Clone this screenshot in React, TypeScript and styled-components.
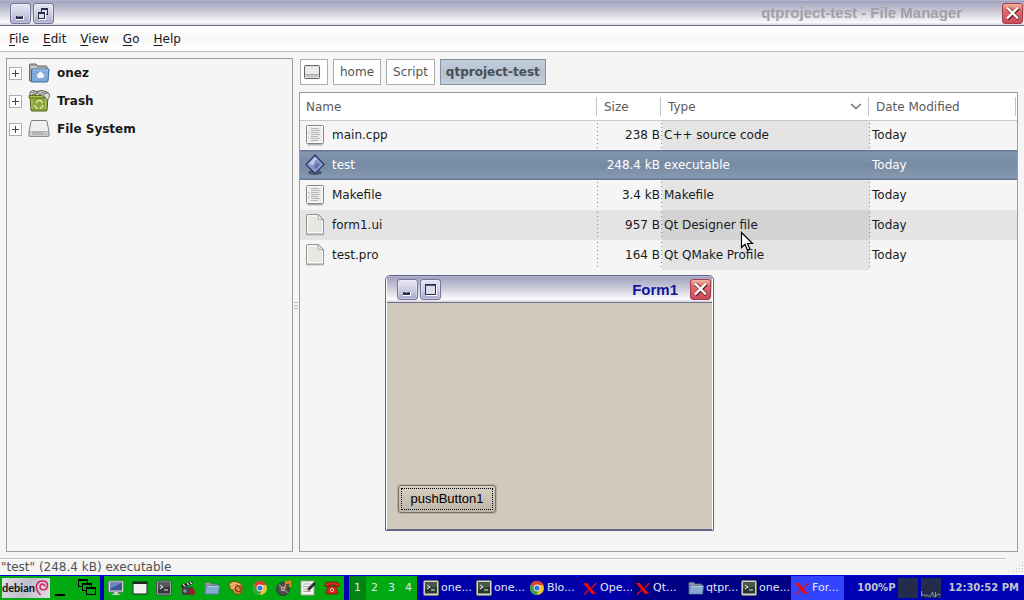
import React from "react";
import styled, { createGlobalStyle, css } from "styled-components";

const GlobalStyle = createGlobalStyle`
  * { box-sizing: border-box; }
  html, body { margin: 0; height: 100%; }
  #root { height: 100%; }
  body { font: 12px/16px "DejaVu Sans", sans-serif; color: #1a1a1a; background: #f5f5f5; overflow: hidden; }
  button { font: inherit; color: inherit; border: 0; padding: 0; margin: 0; background: none; }
  svg { display: block; flex: none; }
`;

const Desktop = styled.div`
  position: relative;
  min-height: 100vh;
  display: flex;
  flex-direction: column;
`;

/* ---------- window chrome ---------- */

const TitleBar = styled.header<{ $floating?: boolean }>`
  height: ${(p) => (p.$floating ? 27 : 26)}px;
  display: flex;
  align-items: center;
  gap: 2px;
  padding: 0 1px 0 10px;
  border-top: 1px solid #b4b4cc;
  border-bottom: 1px solid #70708c;
  background: linear-gradient(#a2a2c0, #c6c6d4 40%, #f6f6f8 85%, #ffffff 88%, #d0d0dc);
  flex: none;
`;

const Title = styled.h1<{ $active?: boolean; $gap: number }>`
  flex: 1;
  margin: 0;
  padding-right: ${(p) => p.$gap}px;
  text-align: right;
  font: bold 15px/20px "Liberation Sans", sans-serif;
  color: ${(p) => (p.$active ? "#1414a0" : "#a0a0a4")};
`;

const ChromeButton = styled.button<{ $close?: boolean }>`
  width: 21px;
  height: 21px;
  border: 1px solid #74749c;
  border-radius: 3px;
  display: flex;
  align-items: center;
  justify-content: center;
  background: linear-gradient(#e6e6f2, #c8c8de 60%, #a6a6c8);
  box-shadow: inset 0 0 0 1px #ffffff55;
  ${(p) =>
    p.$close &&
    css`
      border-color: #a83c4c;
      background: linear-gradient(#f0b8a0, #e06c6c 30%, #c84c58);
      box-shadow: none;
    `}
`;

const MinimizeIcon = () => (
  <svg width="19" height="19" viewBox="0 0 19 19" shapeRendering="crispEdges">
    <path d="M5 12h8v4H5z" fill="#fff" />
    <path d="M5 12h7v3H5z" fill="#2c2c48" />
    <path d="M6 12h5v1H6z" fill="#77779a" />
  </svg>
);
const RestoreIcon = () => (
  <svg width="19" height="19" viewBox="0 0 19 19" shapeRendering="crispEdges">
    <path d="M7.5 4.500h6v6h-6z" fill="#dcdcea" stroke="#2c2c48" />
    <path d="M7 5.500h7" stroke="#2c2c48" />
    <path d="M4.500 8.500h6v6h-6z" fill="#dcdcea" stroke="#2c2c48" />
    <path d="M4 9.500h7" stroke="#2c2c48" />
    <path d="M5 15.500h7M11.500 9v6" stroke="#fff" />
  </svg>
);
const MaximizeIcon = () => (
  <svg width="19" height="19" viewBox="0 0 19 19" shapeRendering="crispEdges">
    <path d="M5 15.500h11M15.500 5v10" stroke="#fff" />
    <path d="M4.500 4.500h10v10h-10z" fill="#dcdcea" stroke="#2c2c48" />
    <path d="M5 5.500h9" stroke="#505078" />
  </svg>
);
const CloseIcon = () => (
  <svg width="19" height="19" viewBox="0 0 19 19">
    <path d="M4.500 4l11 11M15.500 4l-11 11" stroke="#5a1820" strokeWidth="3.600" />
    <path d="M4 3.500l11 11M15 3.500l-11 11" stroke="#fff" strokeWidth="2.400" />
  </svg>
);

const MenuBar = styled.nav`
  height: 26px;
  display: flex;
  align-items: center;
  padding-left: 2px;
  border-bottom: 1px solid #c2c2c2;
  background: linear-gradient(#ffffff, #f6f6f6 55%, #fbfbfb 60%, #ffffff);
  flex: none;
`;
const MenuButton = styled.button`
  padding: 0 7px;
  u { text-underline-offset: 2px; }
`;

/* ---------- body ---------- */

const Body = styled.main`
  flex: 1;
  display: flex;
  padding: 6px;
`;

const SidePane = styled.aside`
  width: 287px;
  flex: none;
  border: 1px solid #9c9c9c;
`;
const Tree = styled.ul`
  list-style: none;
  margin: 0;
  padding: 0 0 0 2px;
`;
const TreeItem = styled.li`
  height: 28px;
  display: flex;
  align-items: center;
  font-weight: bold;
`;
const Expander = styled.button`
  width: 13px;
  height: 13px;
  margin-right: 6px;
  border: 1px solid #b0b0b0;
  background: #fff;
`;
const TreeLabel = styled.span`
  padding-left: 7px;
`;

const Splitter = styled.div`
  width: 6px;
  flex: none;
  display: flex;
  align-items: center;
  justify-content: center;
`;

const MainPane = styled.section`
  flex: 1;
  min-width: 0;
  display: flex;
  flex-direction: column;
`;
const PathBar = styled.nav`
  display: flex;
  gap: 5px;
  padding: 1px 0 7px 1px;
`;
const PathButton = styled.button<{ $current?: boolean; $icon?: boolean }>`
  height: 26px;
  padding: 0 ${(p) => (p.$icon ? 3 : p.$current ? 5 : 6)}px;
  border: 1px solid #adadad;
  background: #fff;
  color: #555;
  ${(p) =>
    p.$current &&
    css`
      font-weight: bold;
      color: #4a4f54;
      border-color: #8393a5;
      background: linear-gradient(#c3ceda, #b4c2d2 55%, #c4cfdb);
    `}
`;

const ListBox = styled.div`
  flex: 1;
  border: 1px solid #9c9c9c;
  background: #f5f5f5;
`;
const FileTable = styled.table`
  width: 100%;
  table-layout: fixed;
  border-collapse: collapse;
`;
const HeadCell = styled.th<{ $width?: number }>`
  width: ${(p) => (p.$width ? `${p.$width}px` : "auto")};
  height: 27px;
  padding: 1px 8px 0 6px;
  text-align: left;
  font-weight: normal;
  color: #5a5a5a;
  border-bottom: 1px solid #c8c8c8;
  background: linear-gradient(#c4c4c4, #c4c4c4) right 1px center / 1px 19px no-repeat, #fff;
`;
const HeadInner = styled.div`
  display: flex;
  align-items: center;
  justify-content: space-between;
`;
const Row = styled.tr<{ $selected?: boolean; $alt?: boolean }>`
  height: 30px;
  background: ${(p) => (p.$alt ? "#e4e4e4" : "#f5f5f5")};
  ${(p) =>
    p.$selected &&
    css`
      color: #fff;
      background: linear-gradient(#63779a 1px, #8396b0 2px, #768aa3 50%, #8599b1 28px, #63779a 29px);
    `}
`;
const Cell = styled.td<{ $shade?: string; $right?: boolean; $last?: boolean }>`
  padding: 0 2px;
  text-align: ${(p) => (p.$right ? "right" : "left")};
  white-space: nowrap;
  background-color: ${(p) => p.$shade ?? "transparent"};
  background-image: ${(p) =>
    p.$last ? "none" : "repeating-linear-gradient(transparent 0 2px, #888 2px 3px, transparent 3px 4px)"};
  background-size: 1px 100%;
  background-position: right top;
  background-repeat: no-repeat;
`;
const NameInner = styled.div`
  display: flex;
  align-items: center;
  gap: 7px;
  padding-left: 3px;
`;

/* ---------- status ---------- */

const StatusBar = styled.footer`
  height: 17px;
  flex: none;
  display: flex;
  justify-content: space-between;
  align-items: flex-end;
  color: #505050;
`;
const StatusText = styled.span`
  flex: 1;
  height: 17px;
  margin-right: 6px;
  padding-left: 1px;
  border-top: 1px solid #c4c4c4;
  box-shadow: inset 0 1px 0 #fff;
`;

/* ---------- floating window ---------- */

const FormWindow = styled.section`
  position: absolute;
  left: 385px;
  top: 275px;
  width: 329px;
  height: 256px;
  display: flex;
  flex-direction: column;
  border: 1px solid #64648a;
  border-radius: 5px 5px 0 0;
  padding: 0 1px;
  background: #fff;
  overflow: hidden;
`;
const FormBody = styled.div`
  flex: 1;
  display: flex;
  align-items: flex-end;
  padding: 0 10px 16px;
  background: #d1c9bc;
  border-bottom: 1px solid #64648a;
`;
const PushButton = styled.button`
  width: 98px;
  height: 28px;
  padding: 2px;
  border: 1px solid #77735f;
  border-radius: 3px;
  background: linear-gradient(#d6cfc2, #bdb6a8);
  box-shadow: 0 0 0 1px #b6afa1;
  font: 13px/20px "Liberation Sans", sans-serif;
  color: #000;
  margin-left: 1px;
`;
const FocusRing = styled.span`
  display: block;
  border: 1px dotted #000;
`;

/* ---------- taskbar ---------- */

const Taskbar = styled.footer`
  height: 25px;
  flex: none;
  display: flex;
  border-top: 1px solid #0000d8;
  background: #0000b4;
  color: #e4e4f4;
  font-size: 11px;
  line-height: 24px;
`;
const GreenGroup = styled.div<{ $gap?: number }>`
  display: flex;
  align-items: center;
  background: #00aa10;
  margin-right: ${(p) => p.$gap ?? 0}px;
`;
const Debian = styled.button`
  display: flex;
  align-items: center;
  height: 20px;
  width: 48px;
  margin-left: 2px;
  background: linear-gradient(120deg, #e4e0e6, #bcbccc 50%, #e4e0e6);
  color: #111;
  font: bold 11px/20px "Lato", sans-serif;
`;
const Launcher = styled.button<{ $w?: number }>`
  width: ${(p) => p.$w ?? 24}px;
  height: 24px;
  display: flex;
  align-items: center;
  justify-content: center;
`;
const Desk = styled.button<{ $on?: boolean }>`
  width: 17px;
  height: 24px;
  background: ${(p) => (p.$on ? "#008414" : "transparent")};
`;
const Tasks = styled.div`
  flex: 1;
  min-width: 0;
  display: flex;
  padding-left: 3px;
`;
const Task = styled.button<{ $tone?: "dark" | "active" }>`
  flex: 0 1 53px;
  height: 24px;
  padding-left: 3px;
  display: flex;
  align-items: center;
  gap: 2px;
  overflow: hidden;
  white-space: nowrap;
  background: ${(p) => (p.$tone === "active" ? "#3344ff" : p.$tone === "dark" ? "#000086" : "#0000a8")};
`;
const Tray = styled.div`
  display: flex;
  align-items: center;
  gap: 3px;
  padding-right: 5px;
  font-size: 10px;
  font-weight: bold;
  color: #c4c4d0;
`;
const Clock = styled.time`
  padding-left: 4px;
`;

/* ---------- icons ---------- */

const FolderHome = () => (
  <svg width="22" height="22" viewBox="0 0 22 22">
    <path d="M1.500 19V3q0-1 1-1H8l1.500 2H18q1 0 1 1v14z" fill="#a8a8a4" stroke="#6c6c6c" />
    <path d="M3 4h5l1 2h9v4H3z" fill="#c8c8c4" />
    <path d="M3.500 8q0-1 1-1h16.500L20 19q-.2 1-1 1H3.500z" fill="#7fa9d8" stroke="#3c6aa4" />
    <path d="M5 8h15" stroke="#b4d0ec" />
    <path d="M12.500 9.500l4.500 4h-1.500v2.500h-6v-2.500H8z" fill="#f2f7fc" />
  </svg>
);
const TrashIcon = () => (
  <svg width="22" height="22" viewBox="0 0 22 22">
    <path d="M2 5V2l3-1.500 4 1 4-1 5 1 3 2-1 4H2z" fill="#c4c6c2" stroke="#62645f" />
    <path d="M5 2l2 3 2-3 3 3 3-3M17 2l1 3M4 4l1 1" fill="none" stroke="#6a6c68" />
    <path d="M2 7.500h18l-1 12.500q0 1-1 1H4q-1 0-1-1z" fill="#8ca43c" stroke="#4c6414" />
    <path d="M4 9v10M18 9l-.5 10" stroke="#b4c870" />
    <path d="M1 5.500h13l2 2.500H1z" fill="#a8c050" stroke="#5a7818" />
    <path d="M15 4.500q6-3 6.500.5t-3 5l-1.500-3z" fill="#dcdedc" stroke="#70726e" />
    <path d="M8 13l2-2.500h3l1.500 2.500M15 15l-1.500 3h-2M10 18H8l-1.500-3" fill="none" stroke="#d8e4a8" strokeWidth="1.500" />
  </svg>
);
const DriveIcon = () => (
  <svg width="22" height="22" viewBox="0 0 22 22">
    <path d="M4 2.500h14q.8 0 1 1l2 10v4q0 1-1 1H2q-1 0-1-1v-4l2-10q.2-1 1-1z" fill="#f0f0ee" stroke="#808080" />
    <path d="M1.500 13.500h19v4q0 .8-.8.8H2.300q-.8 0-.8-.8z" fill="#d4d4d4" stroke="#909090" strokeWidth=".6" />
    <path d="M5 14v3M7 14v3M9 14v3M11 14v3M13 14v3M15 14v3M18 15v2" stroke="#989898" />
  </svg>
);
const SmallDrive = () => (
  <svg width="20" height="16" viewBox="0 0 20 16">
    <rect x=".5" y="1.500" width="15" height="13" rx="1" fill="#e0e0e0" stroke="#666" />
    <path d="M2 3h12l.5 7h-13z" fill="#ececec" />
    <path d="M1 10.500h14" stroke="#aaa" />
    <path d="M3 11v2M5 11v2M7 11v2M9 11v2M11 11v2M13 11v2" stroke="#aaa" />
  </svg>
);
const TextFile = () => (
  <svg width="20" height="22" viewBox="0 0 20 22">
    <path d="M2.500 20.500h15" stroke="#b4b4b0" strokeWidth="2" />
    <rect x="1.500" y="1.500" width="17" height="18" rx="1" fill="#ebebea" stroke="#84847f" />
    <rect x="2.500" y="2.500" width="15" height="16" fill="none" stroke="#fcfcfc" />
    <path d="M6 4.500h8M6 6.500h9M6 8.500h8M6 10.500h9M6 12.500h7M6 14.500h9M6 16.500h7" stroke="#b8b8b6" />
    <path d="M3 8.500h1M3 13.500h1" stroke="#999" />
  </svg>
);
const BlankFile = () => (
  <svg width="20" height="22" viewBox="0 0 20 22">
    <path d="M1 20.500h18" stroke="#c0c0bc" strokeWidth="2" />
    <path d="M2.500 .5h11l5 5v13.500q0 1-1 1h-15q-1 0-1-1V1.500q0-1 1-1z" fill="#e6e8e4" stroke="#92948f" />
    <path d="M12 2H2.700v16.700h14.800V8" fill="none" stroke="#fcfcfc" />
    <path d="M13 .5q.5 2 .3 4.700 3-.2 5.200.8z" fill="#fff" stroke="#92948f" strokeWidth=".8" />
  </svg>
);
const ExecIcon = () => (
  <svg width="20" height="22" viewBox="0 0 20 22">
    <ellipse cx="10" cy="18.500" rx="7" ry="2.500" fill="#384862" opacity=".8" />
    <path d="M10 1l9 9.500-9 9L1 10.500z" fill="#8594c0" stroke="#26346a" strokeWidth="1.200" />
    <path d="M10 3l7 7.500-7 7-7-7z" fill="none" stroke="#a8b6dc" strokeWidth=".8" />
    <path d="M10 3l-6 7 4 1 2-4 2-2z" fill="#c0cae6" />
    <path d="M12 9l3 1-4 5-2-2z" fill="#5c6ea4" />
  </svg>
);
const Plus = () => (
  <svg width="11" height="11" viewBox="0 0 11 11">
    <path d="M2 5.500h7M5.500 2v7" stroke="#444" />
  </svg>
);
const Chevron = () => (
  <svg width="12" height="8" viewBox="0 0 12 8">
    <path d="M1 1l5 4.500L11 1" fill="none" stroke="#707070" strokeWidth="1.600" />
  </svg>
);
const SplitGrip = () => (
  <svg width="4" height="9" viewBox="0 0 4 9">
    <path d="M0 1.500h4M0 4.500h4M0 7.500h4" stroke="#b8b8b8" />
  </svg>
);
const Grip = () => (
  <svg width="12" height="14" viewBox="0 0 12 14" fill="#bcbcbc">
    {[0, 1, 2, 3].flatMap((r) =>
      Array.from({ length: r + 1 }, (_, i) => <rect key={`${r}-${i}`} x={10 - i * 3} y={r * 3 + 1} width="1" height="1" />)
    )}
  </svg>
);
const Swirl = () => (
  <svg width="14" height="18" viewBox="0 0 15 18">
    <path
      d="M6 16.500Q1 12 1.500 7 2.500 1.500 8 1.500t5.500 5Q13 11 9 11T5.500 7.500 8.500 5t2.500 2.500"
      fill="none"
      stroke="#d8205c"
      strokeWidth="1.600"
    />
  </svg>
);
const ShowDesktop = () => (
  <svg width="12" height="20" viewBox="0 0 12 20">
    <path d="M0 16h10v2H0z" fill="#000" />
  </svg>
);
const Cascade = () => (
  <svg width="20" height="20" viewBox="0 0 20 20" shapeRendering="crispEdges">
    {[0, 4, 8].map((o) => (
      <g key={o}>
        <rect x={o + 2.5} y={o + 1.5} width="9" height="7" fill="#00aa10" stroke="#000" />
        <path d={`M${o + 2} ${o + 2.5}h10`} stroke="#000" />
      </g>
    ))}
  </svg>
);
const Monitor = () => (
  <svg width="16" height="16" viewBox="0 0 16 16">
    <rect x=".5" y="1" width="15" height="11" rx="1" fill="#d8d8d4" stroke="#808088" />
    <rect x="2" y="2.500" width="12" height="8" fill="#3c5894" />
    <path d="M2 2.500h12L2 9z" fill="#6c88bc" />
    <path d="M6 12h4v1.500l3 1.500H3l3-1.500z" fill="#ccc" />
  </svg>
);
const WindowIcon = () => (
  <svg width="16" height="16" viewBox="0 0 16 16">
    <rect x="1" y="2" width="14" height="12" fill="#f0f0ec" stroke="#222" />
    <path d="M1 3h14" stroke="#222" strokeWidth="2" />
  </svg>
);
const TerminalIcon = () => (
  <svg width="16" height="16" viewBox="0 0 16 16">
    <rect x=".5" y=".5" width="15" height="15" rx="1.500" fill="#d4d4ca" stroke="#77776e" />
    <rect x="2" y="2" width="12" height="11.500" fill="#263a2c" />
    <path d="M2 2h12v5L2 9z" fill="#47584a" />
    <path d="M4 5l3 2-3 2M8 10h4" fill="none" stroke="#f0f0f0" />
  </svg>
);
const DarkTerminal = () => (
  <svg width="16" height="16" viewBox="0 0 16 16">
    <rect x=".5" y="1" width="15" height="14" rx="1" fill="#a0a0a0" stroke="#505050" />
    <rect x="2" y="2.500" width="12" height="11" fill="#343638" />
    <path d="M2 2.500h12v4L2 9z" fill="#54565a" />
    <path d="M4 5l3 2-3 2M8 10h4" fill="none" stroke="#f0f0f0" />
  </svg>
);
const Clapper = () => (
  <svg width="16" height="16" viewBox="0 0 16 16">
    <path d="M2 7h11v8H2z" fill="#404040" />
    <path d="M1 5l11-4 1 3L2 8z" fill="#222" />
    <path d="M3 4.300l2 2M7 3l2 2M10 2l2 2" stroke="#ddd" strokeWidth="1.300" />
    <circle cx="5" cy="11" r="1.700" fill="#909090" />
    <ellipse cx="12" cy="12" rx="3" ry="3.500" fill="#8e2420" />
    <path d="M11 8l1 3" stroke="#444" />
  </svg>
);
const FolderIcon = () => (
  <svg width="16" height="16" viewBox="0 0 16 16">
    <path d="M1 13.500V2.500h5l1 1.500h6.500v9.500z" fill="#9a9c98" stroke="#6a7078" strokeWidth=".8" />
    <path d="M2.500 5.500H15.500L14.500 14H1z" fill="#87aad0" stroke="#527ba8" strokeWidth=".8" />
    <path d="M3.500 6.500h11" stroke="#bcd4ea" strokeWidth=".8" />
  </svg>
);
const Shell = () => (
  <svg width="16" height="16" viewBox="0 0 16 16">
    <path d="M1 5Q1 1.500 6 1.500q6 0 8 4 1.500 4-.5 7T8 14q-3-1-3.500-4Q1 9 1 5z" fill="#d88c40" stroke="#7c3c10" strokeWidth=".8" />
    <path d="M2 5q4-1 6 2M3 8q2-1 4 0" fill="none" stroke="#f8d8a0" strokeWidth="1.200" />
    <path d="M12.500 6.500q-4-2-5 1t2 4 3.500-2-2-1.500" fill="none" stroke="#703408" strokeWidth="1.200" />
    <path d="M4 3q5-.5 8 2" fill="none" stroke="#f8d898" />
  </svg>
);
const ChromeLogo = () => (
  <svg width="16" height="16" viewBox="0 0 16 16">
    <circle cx="8" cy="8" r="7" fill="#f0c428" />
    <path d="M1.900 4.500A7 7 0 0 1 14.500 5H8a3 3 0 0 0-2.600 4.500z" fill="#dc4030" />
    <path d="M1.900 4.500A7 7 0 0 0 7.500 15l3-5.500a3 3 0 0 1-5.100 0z" fill="#38a048" />
    <circle cx="8" cy="8" r="3.400" fill="#f4f4f4" />
    <circle cx="8" cy="8" r="2.600" fill="#3c78d0" />
  </svg>
);
const Music = () => (
  <svg width="16" height="16" viewBox="0 0 16 16">
    <circle cx="7" cy="9" r="6.500" fill="#4c4c4c" stroke="#303030" />
    <path d="M7 9L3 4.500M7 9l5 4" stroke="#888" strokeWidth="1.500" />
    <circle cx="7" cy="9" r="2.200" fill="#b8b8b8" />
    <circle cx="7" cy="9" r=".8" fill="#222" />
    <path d="M9.500 7V2l5-1v5M9.500 3.500l5-1" fill="none" stroke="#f08020" strokeWidth="1.300" />
    <path d="M8 7h2M13 6h2" stroke="#f08020" strokeWidth="2" />
  </svg>
);
const Editor = () => (
  <svg width="16" height="16" viewBox="0 0 16 16">
    <path d="M1 1h13v14H1z" fill="#f6f6f4" stroke="#a0a09c" />
    <path d="M3 4h8M3 6.500h7M3 9h4M3 11.500h8" stroke="#a8a8a8" />
    <path d="M15 3l-7 7" stroke="#303030" strokeWidth="3" />
    <path d="M6 11.500l1-3 2 2z" fill="#d8b070" />
  </svg>
);
const Phone = () => (
  <svg width="16" height="16" viewBox="0 0 16 16">
    <path d="M1 6.500V4q0-2 7-2t7 2v2.500h-4V5H5v1.500z" fill="#d8241c" stroke="#781008" strokeWidth=".7" />
    <path d="M4.500 6.500h7l2 4v3.500h-11v-3.500z" fill="#d8241c" stroke="#781008" strokeWidth=".7" />
    <circle cx="8" cy="10" r="2" fill="#f0d0c4" />
    <circle cx="8" cy="10" r=".9" fill="#a01010" />
  </svg>
);
const XLogo = () => (
  <svg width="16" height="16" viewBox="0 0 16 16">
    <path d="M1 3h4l9 11h-4z" fill="#f00808" />
    <path d="M14.500 3L9.500 8M6.500 10L2 14.500" stroke="#f00808" strokeWidth="1.200" />
  </svg>
);
const MemGraph = () => (
  <svg width="20" height="20" viewBox="0 0 20 20">
    <path d="M0 0h20v20H0z" fill="#242c4c" />
  </svg>
);
const CpuGraph = () => (
  <svg width="20" height="20" viewBox="0 0 20 20">
    <path d="M0 0h20v20H0z" fill="#242c4c" />
    <path d="M.5 13v5l2-2 2 2 2-1 2 2 2-2 1-3 1 4 2 1V14M14.500 18l3-2 2 1" fill="none" stroke="#8c94a8" />
  </svg>
);

const Cursor = styled.svg`
  position: absolute;
  left: 740px;
  top: 231px;
`;

/* ---------- data ---------- */

const menus = ["File", "Edit", "View", "Go", "Help"];
const places = [
  { name: "onez", Icon: FolderHome },
  { name: "Trash", Icon: TrashIcon },
  { name: "File System", Icon: DriveIcon },
];
const files = [
  { name: "main.cpp", size: "238 B", type: "C++ source code", Icon: TextFile },
  { name: "test", size: "248.4 kB", type: "executable", Icon: ExecIcon, selected: true },
  { name: "Makefile", size: "3.4 kB", type: "Makefile", Icon: TextFile },
  { name: "form1.ui", size: "957 B", type: "Qt Designer file", Icon: BlankFile, alt: true },
  { name: "test.pro", size: "164 B", type: "Qt QMake Profile", Icon: BlankFile },
];
const launchers = [
  { name: "Desktop", Icon: Monitor },
  { name: "Window", Icon: WindowIcon },
  { name: "Terminal", Icon: DarkTerminal },
  { name: "Video", Icon: Clapper },
  { name: "Files", Icon: FolderIcon },
  { name: "Shell", Icon: Shell },
  { name: "Browser", Icon: ChromeLogo },
  { name: "Music", Icon: Music },
  { name: "Editor", Icon: Editor },
  { name: "Phone", Icon: Phone },
];
const tasks: { label: string; Icon: () => React.ReactElement; tone?: "dark" | "active" }[] = [
  { label: "one...", Icon: TerminalIcon },
  { label: "one...", Icon: TerminalIcon },
  { label: "Blo...", Icon: ChromeLogo },
  { label: "Ope...", Icon: XLogo },
  { label: "Qt...", Icon: XLogo, tone: "dark" },
  { label: "qtpr...", Icon: FolderIcon, tone: "dark" },
  { label: "one...", Icon: TerminalIcon, tone: "dark" },
  { label: "For...", Icon: XLogo, tone: "active" },
];

export default function App() {
  return (
    <>
      <GlobalStyle />
      <Desktop>
        <TitleBar>
          <ChromeButton aria-label="Minimize"><MinimizeIcon /></ChromeButton>
          <ChromeButton aria-label="Restore"><RestoreIcon /></ChromeButton>
          <Title $gap={38}>qtproject-test - File Manager</Title>
          <ChromeButton $close aria-label="Close"><CloseIcon /></ChromeButton>
        </TitleBar>
        <MenuBar>
          {menus.map((m) => (
            <MenuButton key={m}><u>{m[0]}</u>{m.slice(1)}</MenuButton>
          ))}
        </MenuBar>
        <Body>
          <SidePane>
            <Tree>
              {places.map(({ name, Icon }) => (
                <TreeItem key={name}>
                  <Expander aria-label={`Expand ${name}`}><Plus /></Expander>
                  <Icon />
                  <TreeLabel>{name}</TreeLabel>
                </TreeItem>
              ))}
            </Tree>
          </SidePane>
          <Splitter><SplitGrip /></Splitter>
          <MainPane>
            <PathBar>
              <PathButton $icon aria-label="File System"><SmallDrive /></PathButton>
              <PathButton>home</PathButton>
              <PathButton>Script</PathButton>
              <PathButton $current>qtproject-test</PathButton>
            </PathBar>
            <ListBox>
              <FileTable>
                <thead>
                  <tr>
                    <HeadCell>Name</HeadCell>
                    <HeadCell $width={64}>Size</HeadCell>
                    <HeadCell $width={208}><HeadInner>Type<Chevron /></HeadInner></HeadCell>
                    <HeadCell $width={147}>Date Modified</HeadCell>
                  </tr>
                </thead>
                <tbody>
                  {files.map(({ name, size, type, Icon, selected, alt }) => (
                    <Row key={name} $selected={selected} $alt={alt}>
                      <Cell><NameInner><Icon />{name}</NameInner></Cell>
                      <Cell $right>{size}</Cell>
                      <Cell $shade={selected ? undefined : alt ? "#d3d3d3" : "#e4e4e4"}>{type}</Cell>
                      <Cell $last>Today</Cell>
                    </Row>
                  ))}
                </tbody>
              </FileTable>
            </ListBox>
          </MainPane>
        </Body>
        <StatusBar>
          <StatusText>"test" (248.4 kB) executable</StatusText>
          <Grip />
        </StatusBar>
        <Taskbar>
          <GreenGroup $gap={4}>
            <Debian>debian<Swirl /></Debian>
            <Launcher $w={22} aria-label="Show desktop"><ShowDesktop /></Launcher>
            <Launcher $w={28} aria-label="Window list"><Cascade /></Launcher>
          </GreenGroup>
          <GreenGroup $gap={5}>
            {launchers.map(({ name, Icon }) => (
              <Launcher key={name} aria-label={name}><Icon /></Launcher>
            ))}
          </GreenGroup>
          <GreenGroup>
            {[1, 2, 3, 4].map((n) => (
              <Desk key={n} $on={n === 1}>{n}</Desk>
            ))}
          </GreenGroup>
          <Tasks>
            {tasks.map(({ label, Icon, tone }, i) => (
              <Task key={i} $tone={tone}><Icon />{label}</Task>
            ))}
          </Tasks>
          <Tray>
            <span>100%P</span>
            <MemGraph />
            <CpuGraph />
            <Clock>12:30:52 PM</Clock>
          </Tray>
        </Taskbar>

        <FormWindow>
          <TitleBar $floating>
            <ChromeButton aria-label="Minimize"><MinimizeIcon /></ChromeButton>
            <ChromeButton aria-label="Maximize"><MaximizeIcon /></ChromeButton>
            <Title $active $gap={10}>Form1</Title>
            <ChromeButton $close aria-label="Close"><CloseIcon /></ChromeButton>
          </TitleBar>
          <FormBody>
            <PushButton><FocusRing>pushButton1</FocusRing></PushButton>
          </FormBody>
        </FormWindow>

        <Cursor width="14" height="21" viewBox="0 0 14 21">
          <path d="M1.500 1.500v15l3.500-3.300 2.500 6 2.500-1-2.500-5.700h5z" fill="#fff" stroke="#000" strokeWidth="1.200" />
        </Cursor>
      </Desktop>
    </>
  );
}
